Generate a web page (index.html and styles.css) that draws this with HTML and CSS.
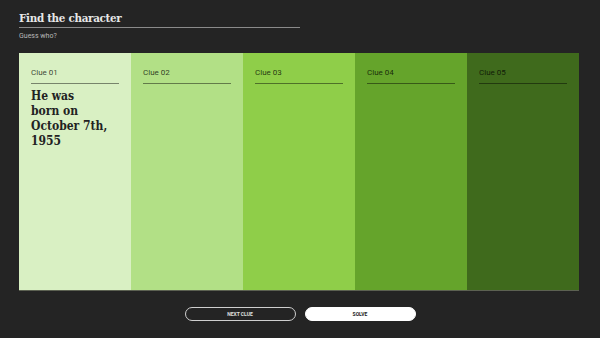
FILE: index.html
```html
<!DOCTYPE html>
<html lang="en">
<head>
    <meta charset="UTF-8">
    <meta name="viewport" content="width=device-width, initial-scale=1.0">
    <title>Find the character</title>
    <link rel="stylesheet" href="styles.css">
</head>
<body>

    <header class="header">
        <h1 class="title">Find the character</h1>
        <p class="subtitle">Guess who?</p>
    </header>

    <!-- Clues -->
    <section class="clues">
        <div class="clue clue-1">
            <div class="clue-label">Clue 01</div>
            <div class="clue-text">He was<br>born on<br>October 7th,<br>1955</div>
        </div>
        <div class="clue clue-2">
            <div class="clue-label">Clue 02</div>
        </div>
        <div class="clue clue-3">
            <div class="clue-label">Clue 03</div>
        </div>
        <div class="clue clue-4">
            <div class="clue-label">Clue 04</div>
        </div>
        <div class="clue clue-5">
            <div class="clue-label">Clue 05</div>
        </div>
    </section>

    <div class="actions">
        <button class="btn btn-outline">NEXT CLUE</button>
        <button class="btn btn-solid">SOLVE</button>
    </div>

</body>
</html>
```

FILE: styles.css
```css
html, body {
    height: 100%;
}

body {
    margin: 0;
    padding: 10px 21px 0 19px;
    box-sizing: border-box;
    background-color: #242424;
    font-family: Roboto, "Noto Sans", sans-serif;
    display: flex;
    flex-direction: column;
}

.header {
    width: 281px;
}

.title {
    margin: 0;
    font-family: "DejaVu Serif Condensed", "DejaVu Serif", serif;
    font-weight: bold;
    font-size: 11.5px;
    letter-spacing: -0.3px;
    line-height: 16px;
    color: #e8e8e8;
    padding-bottom: 1px;
    border-bottom: 1px solid #8a8a8a;
}

.subtitle {
    margin: 4px 0 0;
    font-size: 7px;
    line-height: 9px;
    color: #b8b8b8;
}

.clues {
    margin-top: 12px;
    height: 237px;
    display: grid;
    grid-template-columns: repeat(5, 1fr);
    border-bottom: 1px solid #5c6152;
}

.clue {
    padding: 15px 12px 0 12px;
}

.clue-1 { background-color: #d9f0c3; }
.clue-2 { background-color: #b2e086; }
.clue-3 { background-color: #8fce49; }
.clue-4 { background-color: #65a42b; }
.clue-5 { background-color: #3f6a1c; }

.clue-label {
    font-size: 8px;
    line-height: 10px;
    color: rgba(0, 0, 0, 0.75);
    padding-bottom: 5px;
    border-bottom: 1px solid rgba(0, 0, 0, 0.45);
}

.clue-text {
    margin-top: 5px;
    font-family: "DejaVu Serif Condensed", "DejaVu Serif", serif;
    font-weight: bold;
    font-size: 12px;
    line-height: 15px;
    color: #222;
}

.actions {
    display: flex;
    justify-content: center;
    gap: 9px;
    margin-top: 16px;
    padding-left: 2px;
}

.btn {
    width: 111px;
    height: 14px;
    border-radius: 7px;
    font-family: Roboto, sans-serif;
    font-weight: bold;
    font-size: 5px;
    padding: 0;
    cursor: pointer;
}

.btn-outline {
    background: none;
    color: #e0e0e0;
    border: 1px solid #cfcfcf;
}

.btn-solid {
    background-color: #fff;
    color: #222;
    border: 1px solid #fff;
}
```
